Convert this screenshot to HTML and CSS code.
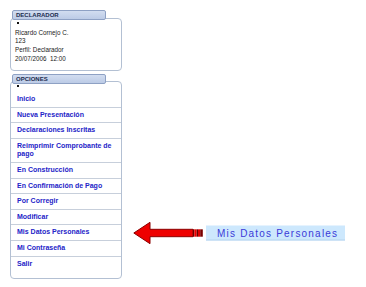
FILE: index.html
```html
<!DOCTYPE html>
<html>
<head>
<meta charset="utf-8">
<link rel="stylesheet" href="styles.css">
</head>
<body>
<div class="page">
  <div class="panel">
    <div class="tab">DECLARADOR</div>
    <div class="box info">
      <div class="dot"></div>
      <div class="lines">
        <div>Ricardo Cornejo C.</div>
        <div>123</div>
        <div>Perfil: Declarador</div>
        <div>20/07/2006&nbsp;&nbsp;12:00</div>
      </div>
    </div>
  </div>
  <div class="panel menu-panel">
    <div class="tab">OPCIONES</div>
    <div class="box menu">
      <div class="dot"></div>
      <ul class="items">
        <li>Inicio</li>
        <li>Nueva Presentación</li>
        <li>Declaraciones Inscritas</li>
        <li>Reimprimir Comprobante de pago</li>
        <li>En Construcción</li>
        <li>En Confirmación de Pago</li>
        <li>Por Corregir</li>
        <li>Modificar</li>
        <li class="target">Mis Datos Personales
          <div class="callout">
            <svg class="arrow" width="73" height="23" viewBox="0 0 73 23">
              <path d="M0.8 11.5 L17 0.8 L17 7.8 L60 7.8 L60 15.2 L17 15.2 L17 22.2 Z" fill="#ee0000" stroke="#8a0000" stroke-width="1"/>
              <rect x="60" y="7.8" width="1.3" height="7.4" fill="#6a0000"/>
              <rect x="61.3" y="7.8" width="2.4" height="7.4" fill="#ee0000"/>
              <rect x="63.7" y="7.8" width="1.3" height="7.4" fill="#6a0000"/>
              <rect x="65" y="7.8" width="2.2" height="7.4" fill="#dd0000"/>
              <rect x="67.2" y="7.8" width="2.6" height="7.4" fill="#7a0000"/>
            </svg>
            <div class="label">Mis Datos Personales</div>
          </div>
        </li>
        <li>Mi Contraseña</li>
        <li>Salir</li>
      </ul>
    </div>
  </div>
</div>
</body>
</html>
```

FILE: styles.css
```css
html, body {
  margin: 0;
  padding: 0;
  background: #ffffff;
}

body {
  font-family: "Liberation Sans", Arial, sans-serif;
}

.page {
  padding: 10px 0 0 10px;
}

.panel {
  width: 112px;
}

.menu-panel {
  margin-top: 2.5px;
}

.tab {
  position: relative;
  z-index: 1;
  box-sizing: border-box;
  margin-left: 2px;
  width: 94px;
  height: 10px;
  padding-left: 3px;
  background: linear-gradient(#d2ddf0, #bccbe6);
  border: 1px solid #8ea1c4;
  border-radius: 2px;
  font-size: 6px;
  font-weight: bold;
  line-height: 8px;
  color: #1c2c50;
}

.box {
  box-sizing: border-box;
  margin-top: -2.5px;
  border: 1px solid #b3c0d3;
  border-radius: 4px;
  background: #ffffff;
}

.dot {
  width: 2px;
  height: 2px;
  background: #111111;
  margin-left: 6px;
}

.info {
  padding: 3.5px 4px 6.5px 4px;
}

.info .dot {
  margin-left: 2px;
}

.lines {
  margin-top: 4.7px;
  font-size: 6.3px;
  line-height: 8.7px;
  color: #1a1a1a;
}

.menu {
  padding: 2.5px 0 7px 0;
}

.items {
  list-style: none;
  margin: 5.5px 0 0 0;
  padding: 0;
}

.items li {
  position: relative;
  padding: 3px 6px 2.9px 6px;
  line-height: 8.7px;
  font-size: 7px;
  font-weight: bold;
  color: #2424c8;
  border-bottom: 1px solid #c7cfdb;
}

.items li:last-child {
  border-bottom: none;
}

.callout {
  position: absolute;
  left: 122px;
  top: 50%;
  transform: translateY(-50%);
  display: flex;
  align-items: center;
  font-weight: normal;
}

.arrow {
  display: block;
  flex: none;
}

.label {
  flex: none;
  box-sizing: border-box;
  width: 139px;
  height: 15px;
  padding-left: 11px;
  background: #cde8fd;
  border-bottom: 1px solid #b5d3ee;
  font-size: 10px;
  line-height: 15px;
  letter-spacing: 1.2px;
  color: #3a3ad8;
  white-space: nowrap;
}
```
